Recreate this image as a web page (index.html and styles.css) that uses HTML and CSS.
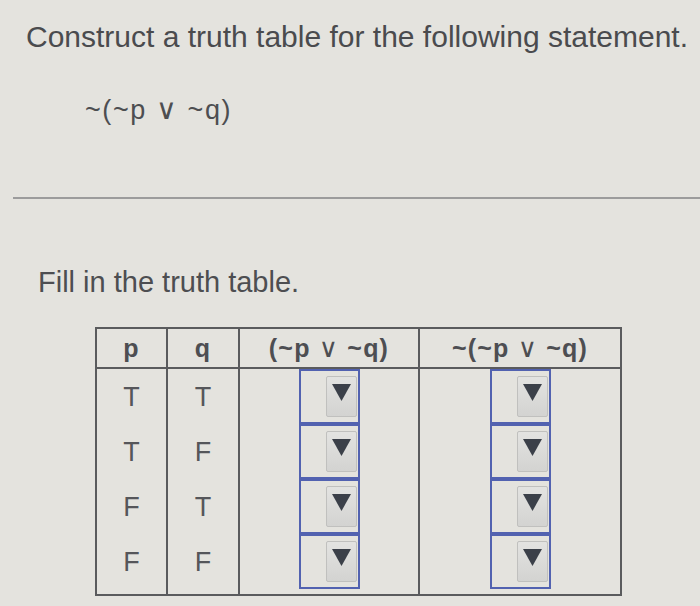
FILE: index.html
```html
<!DOCTYPE html>
<html lang="en">
<head>
<meta charset="utf-8">
<title>Truth table</title>
<link rel="stylesheet" href="styles.css">
</head>
<body>
<main class="page">
  <h1 class="title">Construct a truth table for the following statement.</h1>
  <p class="formula">~(~p <span class="or">∨</span> ~q)</p>
  <hr class="rule">
  <p class="instr">Fill in the truth table.</p>
  <table class="tt">
    <colgroup>
      <col class="c-p"><col class="c-q"><col class="c-or"><col class="c-neg">
    </colgroup>
    <thead>
      <tr><th>p</th><th>q</th><th>(~p <span class="or">∨</span> ~q)</th><th>~(~p <span class="or">∨</span> ~q)</th></tr>
    </thead>
    <tbody>
      <tr>
        <td class="val">T</td><td class="val">T</td>
        <td class="sel"><div class="box"><span class="btn"><svg viewBox="0 0 19 17" width="19" height="17"><polygon points="0,0 19,0 9.5,17" fill="#3b4049"/></svg></span></div></td>
        <td class="sel"><div class="box"><span class="btn"><svg viewBox="0 0 19 17" width="19" height="17"><polygon points="0,0 19,0 9.5,17" fill="#3b4049"/></svg></span></div></td>
      </tr>
      <tr>
        <td class="val">T</td><td class="val">F</td>
        <td class="sel"><div class="box"><span class="btn"><svg viewBox="0 0 19 17" width="19" height="17"><polygon points="0,0 19,0 9.5,17" fill="#3b4049"/></svg></span></div></td>
        <td class="sel"><div class="box"><span class="btn"><svg viewBox="0 0 19 17" width="19" height="17"><polygon points="0,0 19,0 9.5,17" fill="#3b4049"/></svg></span></div></td>
      </tr>
      <tr>
        <td class="val">F</td><td class="val">T</td>
        <td class="sel"><div class="box"><span class="btn"><svg viewBox="0 0 19 17" width="19" height="17"><polygon points="0,0 19,0 9.5,17" fill="#3b4049"/></svg></span></div></td>
        <td class="sel"><div class="box"><span class="btn"><svg viewBox="0 0 19 17" width="19" height="17"><polygon points="0,0 19,0 9.5,17" fill="#3b4049"/></svg></span></div></td>
      </tr>
      <tr class="last">
        <td class="val">F</td><td class="val">F</td>
        <td class="sel"><div class="box"><span class="btn"><svg viewBox="0 0 19 17" width="19" height="17"><polygon points="0,0 19,0 9.5,17" fill="#3b4049"/></svg></span></div></td>
        <td class="sel"><div class="box"><span class="btn"><svg viewBox="0 0 19 17" width="19" height="17"><polygon points="0,0 19,0 9.5,17" fill="#3b4049"/></svg></span></div></td>
      </tr>
    </tbody>
  </table>
</main>
</body>
</html>
```

FILE: styles.css
```css
html, body {
  margin: 0;
  padding: 0;
  background: #e4e3de;
}
body {
  width: 700px;
  height: 606px;
  overflow: hidden;
  font-family: "Liberation Sans", Arial, "DejaVu Sans", sans-serif;
  color: #4a4b4e;
}
.page {
  padding-top: 20px;
}
.title {
  margin: 0 0 0 26px;
  font-size: 30px;
  font-weight: normal;
  line-height: 34px;
  white-space: nowrap;
}
.formula {
  margin: 40px 0 0 85px;
  font-size: 27px;
  line-height: 32px;
  letter-spacing: 1.6px;
  color: #4d4e51;
}
.or {
  font-family: "DejaVu Sans", sans-serif;
  font-weight: normal;
  font-size: 1.05em;
  line-height: 1;
}
.rule {
  margin: 71px 0 0 13px;
  height: 0;
  border: 0;
  border-top: 2px solid #9c9c9c;
}
.instr {
  margin: 67px 0 0 38px;
  font-size: 29px;
  line-height: 33px;
  color: #4d4e51;
}
.tt {
  margin: 28px 0 0 95px;
  border-collapse: collapse;
  table-layout: fixed;
  width: 525px;
  border: 2px solid #58595b;
}
.c-p { width: 71px; }
.c-q { width: 72px; }
.c-or { width: 180px; }
.c-neg { width: 202px; }
.tt th, .tt td {
  border: 2px solid #5a5b5d;
  padding: 0;
}
.tt th {
  height: 38px;
  font-size: 25px;
  font-weight: bold;
  letter-spacing: 1.2px;
  color: #4d4e52;
  text-align: center;
  vertical-align: middle;
}
.tt tbody tr {
  height: 55px;
}
.tt tbody tr.last {
  height: 61px;
}
.tt tbody td {
  border-top: 0;
  border-bottom: 0;
  vertical-align: top;
}
.tt tbody tr.last td {
  border-bottom: 2px solid #5a5b5d;
}
.val {
  text-align: center;
  font-size: 27px;
  line-height: 28px;
  padding-top: 14px !important;
  color: #55565a;
}
.sel {
  text-align: center;
}
.box {
  display: inline-flex;
  justify-content: flex-end;
  align-items: center;
  box-sizing: border-box;
  width: 61px;
  height: 55px;
  border: 2px solid #5262b0;
  padding-right: 1px;
  vertical-align: top;
}
.btn {
  display: flex;
  justify-content: center;
  align-items: flex-start;
  box-sizing: border-box;
  width: 31px;
  height: 41px;
  padding-top: 7px;
  background: linear-gradient(#e3e3e1, #d3d3d1);
  border: 1px solid #c0c0be;
  border-radius: 2px;
}
```
